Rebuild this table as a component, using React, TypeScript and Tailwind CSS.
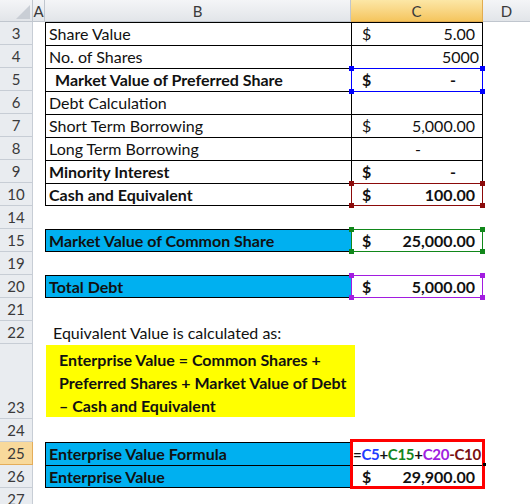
import type { ReactNode } from 'react';

function Handles({ color }: { color: string }) {
  return (
    <>
      <span className={`absolute -left-[3px] -top-[3px] h-[5px] w-[5px] ${color}`} />
      <span className={`absolute -right-[3px] -top-[3px] h-[5px] w-[5px] ${color}`} />
      <span className={`absolute -left-[3px] -bottom-[3px] h-[5px] w-[5px] ${color}`} />
      <span className={`absolute -right-[3px] -bottom-[3px] h-[5px] w-[5px] ${color}`} />
    </>
  );
}

function Row({ n, h = 'h-[23px]', active = false, labelBottom = false, children }: { n: number; h?: string; active?: boolean; labelBottom?: boolean; children?: ReactNode }) {
  return (
    <div className={`flex ${h}`}>
      <div className={`w-[33px] shrink-0 flex justify-center border-r border-b text-[15px] text-[#3a3a3a] ${active ? 'bg-[#f8d99b] border-[#e4ad5a]' : 'bg-[#e9ecf0] border-[#c7cdd5]'} ${labelBottom ? 'items-end pb-[1px]' : 'items-center'}`}>{n}</div>
      <div className="w-[12px] shrink-0" />
      {children}
    </div>
  );
}

const bCell = 'w-[306px] shrink-0 flex items-center border-l border-t border-black px-[3px]';
const cCell = 'relative w-[132px] shrink-0 flex items-center justify-between border-x border-t border-black pl-[10px] pr-[7px]';

export default function App() {
  return (
    <div className="w-[530px] h-[504px] overflow-hidden bg-white text-[16px] leading-[20px] text-[#111] font-[Lato,'Liberation_Sans',sans-serif]">
      {/* column headers */}
      <div className="flex h-[22px] text-[15px] text-[#3a3a3a]">
        <div className="w-[33px] shrink-0 relative border-r border-b border-[#c0c6ce] bg-linear-to-b from-[#f4f5f7] to-[#e2e5e9]">
          <svg className="absolute right-[2px] bottom-[2px]" width="14" height="14" viewBox="0 0 14 14"><polygon points="14,0 14,14 0,14" fill="#c9ced5" /></svg>
        </div>
        <div className="w-[12px] shrink-0 flex items-center justify-center border-r border-b border-[#c0c6ce] bg-linear-to-b from-[#f4f5f7] to-[#e2e5e9]">A</div>
        <div className="w-[306px] shrink-0 flex items-center justify-center border-r border-b border-[#c0c6ce] bg-linear-to-b from-[#f4f5f7] to-[#e2e5e9]">B</div>
        <div className="w-[132px] shrink-0 flex items-center justify-center border-r border-b border-[#e2ac4f] bg-linear-to-b from-[#fce7a6] to-[#f5c55d]">C</div>
        <div className="flex-1 flex items-center justify-center border-b border-[#c0c6ce] bg-linear-to-b from-[#f4f5f7] to-[#e2e5e9]">D</div>
      </div>

      <Row n={3}>
        <div className={bCell}>Share Value</div>
        <div className={cCell}><span>$</span><span>5.00</span></div>
      </Row>
      <Row n={4}>
        <div className={bCell}>No. of Shares</div>
        <div className={`${cCell} !pr-[3px]`}><span /><span>5000</span></div>
      </Row>
      <Row n={5}>
        <div className={`${bCell} pl-[9px] font-bold`}>Market Value of Preferred Share</div>
        <div className={`${cCell} font-bold !pr-[26px]`}>
          <span>$</span><span>-</span>
          <div className="absolute -inset-px z-10 border border-[#0000ff]"><Handles color="bg-[#0000ff]" /></div>
        </div>
      </Row>
      <Row n={6}>
        <div className={bCell}>Debt Calculation</div>
        <div className={cCell} />
      </Row>
      <Row n={7}>
        <div className={bCell}>Short Term Borrowing</div>
        <div className={cCell}><span>$</span><span>5,000.00</span></div>
      </Row>
      <Row n={8}>
        <div className={bCell}>Long Term Borrowing</div>
        <div className={`${cCell} !pr-[61px]`}><span /><span>-</span></div>
      </Row>
      <Row n={9}>
        <div className={`${bCell} font-bold`}>Minority Interest</div>
        <div className={`${cCell} font-bold !pr-[26px]`}><span>$</span><span>-</span></div>
      </Row>
      <Row n={10}>
        <div className={`${bCell} border-b font-bold`}>Cash and Equivalent</div>
        <div className={`${cCell} border-b font-bold`}>
          <span>$</span><span>100.00</span>
          <div className="absolute -inset-px z-10 border border-[#8b0a0a]"><Handles color="bg-[#8b0a0a]" /></div>
        </div>
      </Row>
      <Row n={14} />
      <Row n={15}>
        <div className="w-[306px] shrink-0 flex items-center border-l border-y border-black bg-[#00b0f0] px-[3px] font-bold">Market Value of Common Share</div>
        <div className="relative w-[132px] shrink-0 flex items-center justify-between pl-[11px] pr-[8px] font-bold">
          <span>$</span><span>25,000.00</span>
          <div className="absolute inset-0 z-10 border border-[#11871a]"><Handles color="bg-[#11871a]" /></div>
        </div>
      </Row>
      <Row n={19} />
      <Row n={20}>
        <div className="w-[306px] shrink-0 flex items-center border-l border-y border-black bg-[#00b0f0] px-[3px] font-bold">Total Debt</div>
        <div className="relative w-[132px] shrink-0 flex items-center justify-between pl-[11px] pr-[8px] font-bold">
          <span>$</span><span>5,000.00</span>
          <div className="absolute inset-0 z-10 border border-[#a21ce0]"><Handles color="bg-[#a21ce0]" /></div>
        </div>
      </Row>
      <Row n={21} />
      <Row n={22}>
        <div className="flex items-center pl-[8px]">Equivalent Value is calculated as:</div>
      </Row>
      <Row n={23} h="h-[75px]" labelBottom>
        <div className="ml-px mt-px h-[72px] w-[309px] shrink-0 bg-[#ffff00] pl-[13px] pt-[3px] font-bold leading-[23px]">
          <div>Enterprise Value = Common Shares +</div>
          <div>Preferred Shares + Market Value of Debt</div>
          <div>– Cash and Equivalent</div>
        </div>
      </Row>
      <Row n={24} />
      <div className="relative">
        <Row n={25} active>
          <div className="w-[306px] shrink-0 flex items-center border-l border-t border-black bg-[#00b0f0] px-[3px] font-bold">Enterprise Value Formula</div>
          <div className="w-[132px] shrink-0 flex items-center whitespace-nowrap pl-[2px] text-[15px] tracking-[-0.3px] font-bold">
            <span>=</span><span className="text-[#1f3cff]">C5</span><span>+</span><span className="text-[#14851c]">C15</span><span>+</span><span className="text-[#a020e0]">C20</span><span className="text-[#7a1010]">-C10</span>
          </div>
        </Row>
        <Row n={26}>
          <div className="w-[306px] shrink-0 flex items-center border-l border-y border-black bg-[#00b0f0] px-[3px] font-bold">Enterprise Value</div>
          <div className="w-[132px] shrink-0 flex items-center justify-between border-t border-black pl-[11px] pr-[8px] font-bold"><span>$</span><span>29,900.00</span></div>
        </Row>
        <div className="absolute left-[350px] -top-[3px] z-10 h-[50px] w-[135px] border-[3px] border-[#ff0000]" />
        <span className="absolute left-[483px] top-[21px] z-20 h-[3px] w-[3px] bg-black" />
      </div>
      <Row n={27} />
    </div>
  );
}
